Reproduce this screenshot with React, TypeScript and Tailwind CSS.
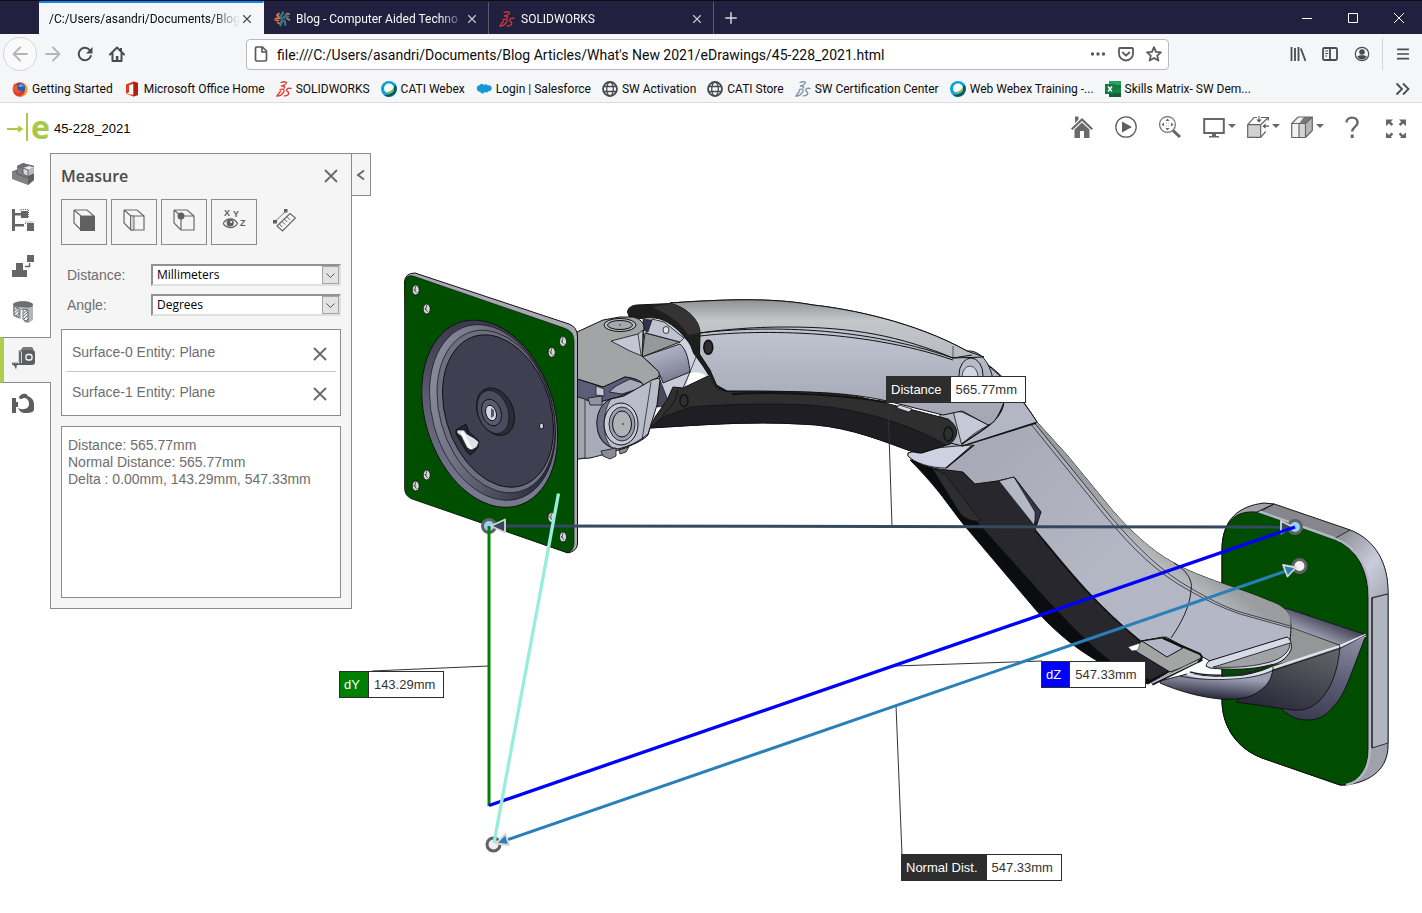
import type { ReactNode } from 'react';
import { Menu, Plus, X } from 'lucide-react';

interface IconProps {
  children: ReactNode;
  size?: number;
  box?: number;
}

function Icon({ children, size = 16, box = 16 }: IconProps) {
  return (
    <svg width={size} height={size} viewBox={`0 0 ${box} ${box}`} fill="none" className="shrink-0" aria-hidden="true">
      {children}
    </svg>
  );
}

/* ---------- favicons ---------- */

function SwIcon({ color }: { color: string }) {
  return (
    <Icon>
      <g stroke={color} strokeWidth="1.3" strokeLinecap="round" strokeLinejoin="round">
        <path d="M5 1.500C8 .3 11 .6 10.300 2.200 9.600 3.600 7.500 4.600 5.500 5c2.800-.2 3.600.8 2.600 2" />
        <path d="M4 8.500c3.600-1.200 5 .2 3.600 2.600C6.200 13.400 3.600 15 .8 15.200L4.600 10" />
        <path d="M15.200 7.500c-2-.6-4.400 0-4.600 1.600-.2 1.500 2.600 1.700 2.100 3.500-.4 1.600-2.400 2.300-4.500 2.200" />
      </g>
    </Icon>
  );
}

function CatiIcon() {
  return (
    <Icon>
      <g strokeWidth="2.200" strokeLinecap="round">
        <path d="M9 1.500L6.500 6M10 6l4-.5M8 9l-1.500 5.500M10.500 9.500l1 4.500M5.500 6.500L3.500 4" stroke="#2d7894" />
        <path d="M5 7.500l5-.5M7 11l4-1M11 4l3.500-1" stroke="#3a6b85" />
        <path d="M5 2.500l-2 1.500 2 3-3.500.5M1 9l3.500.5M13 2.500l2 .5M13 7.500l2.500 1.500M3.500 11.500l2 1" stroke="#e0702b" strokeWidth="1.700" />
      </g>
    </Icon>
  );
}

function FirefoxIcon() {
  return (
    <Icon>
      <circle cx="8" cy="8.500" r="7.300" fill="#e8392b" />
      <path d="M8 1.500a7 7 0 017.300 6.800c0 4-3 7.200-7.300 7.300 3-1 5-3.600 4.800-6.600C12.700 6 11 3 8 1.500z" fill="#ff9a1f" />
      <circle cx="8.300" cy="7" r="4.800" fill="#2a56b5" />
      <path d="M7 3.500c2-.6 4 .2 5 2.200-1-.5-2-.4-2.600.3L7.200 6z" fill="#3fb7e8" />
      <path d="M.8 8C.8 5 2 3 3 2l.6 2.200C5 3.800 6 4.400 6.500 5.500L5.200 7c.4 2.600 3 3.400 5.400 2.600-1 2.400-5 3.400-7.400 1.400C1.800 10 1 9 .8 8z" fill="#f0582a" />
    </Icon>
  );
}

function OfficeIcon() {
  return (
    <Icon>
      <path d="M2 3.500L9.500.5 14 2v12l-4.500 1.500L2 12.800l7.500.9V3L5 4.200v7.300L2 12.800z" fill="#d83b1f" />
      <path d="M9.500.5L14 2v12l-4.500 1.500z" fill="#b3200f" />
    </Icon>
  );
}

function WebexIcon() {
  return (
    <Icon>
      <circle cx="8" cy="8" r="8" fill="#0aa2dc" />
      <path d="M14.500 3.500A8 8 0 013 14.200 10 10 0 0013 6z" fill="#12506e" />
      <circle cx="8" cy="7.500" r="5" fill="#fff" />
      <path d="M12.800 6.200a5 5 0 01-8.600 4.600C8 11.500 11 9.500 12.800 6.200z" fill="#6cbf45" />
    </Icon>
  );
}

function CloudIcon() {
  return (
    <Icon>
      <path d="M1 8.500c-.8-2 .3-4 2.300-4.200C4.500 2.500 7 2.500 8 4c1-1 3-.9 3.700.4 2-.6 4 .7 4 2.900 0 2-1.700 3.200-3.400 2.900-.8 1.500-2.500 1.500-3.400.8-1 2-4 2-4.700-.3C2.500 11 1.300 10 1 8.500z" fill="#1499d6" />
    </Icon>
  );
}

function GlobeIcon() {
  return (
    <Icon>
      <g stroke="#4a4a4c" strokeWidth="1.300">
        <circle cx="8" cy="8" r="7" strokeWidth="1.800" />
        <ellipse cx="8" cy="8" rx="3.300" ry="7" />
        <path d="M2 5.500h12M2 10.500h12" />
      </g>
    </Icon>
  );
}

function ExcelIcon() {
  return (
    <Icon>
      <path d="M4 0h12v16H4z" fill="#21a366" />
      <path d="M10 4h6v4h-6z" fill="#107c41" />
      <path d="M4 8h12v8H4z" fill="#185c37" />
      <path d="M10 8h6v4h-6z" fill="#17864c" />
      <path d="M0 3h10v10H0z" fill="#107c41" />
      <path d="M3 5.500l4 5M7 5.500l-4 5" stroke="#fff" strokeWidth="1.500" />
    </Icon>
  );
}

const bookmarks = [
  { label: 'Getting Started', icon: <FirefoxIcon /> },
  { label: 'Microsoft Office Home', icon: <OfficeIcon /> },
  { label: 'SOLIDWORKS', icon: <SwIcon color="#e03c31" /> },
  { label: 'CATI Webex', icon: <WebexIcon /> },
  { label: 'Login | Salesforce', icon: <CloudIcon /> },
  { label: 'SW Activation', icon: <GlobeIcon /> },
  { label: 'CATI Store', icon: <GlobeIcon /> },
  { label: 'SW Certification Center', icon: <SwIcon color="#7d93ad" /> },
  { label: 'Web Webex Training -...', icon: <WebexIcon /> },
  { label: 'Skills Matrix- SW Dem...', icon: <ExcelIcon /> },
];

/* ---------- browser chrome ---------- */

interface TabProps {
  title: string;
  icon?: ReactNode;
  active?: boolean;
}

function Tab({ title, icon, active }: TabProps) {
  const look = active
    ? 'border-t-[#0a84ff] bg-[#f5f6f7] text-[#0c0c0d] border-r-transparent'
    : 'border-t-transparent text-[#f9f9fa] border-r-[#5b5b74]';
  return (
    <div className={`flex w-[225px] items-center border-t-2 border-r pr-[9px] pl-[10px] ${look}`}>
      {icon && <span className="mr-1.5">{icon}</span>}
      <span className="flex-1 whitespace-nowrap [mask-image:linear-gradient(to_right,black_85%,transparent)]">
        {title}
      </span>
      <button aria-label="Close tab" className="shrink-0">
        <X size={14} strokeWidth={2} className={active ? 'text-[#4a4a4f]' : 'text-[#c5c5d0]'} />
      </button>
    </div>
  );
}

function TabBar() {
  return (
    <div className="flex h-[34px] border-t border-[#0d0d14] bg-[#21213f] pl-[39px]">
      <Tab title="/C:/Users/asandri/Documents/Blog" active />
      <Tab title="Blog - Computer Aided Techno" icon={<CatiIcon />} />
      <Tab title="SOLIDWORKS" icon={<SwIcon color="#d8343c" />} />
      <button aria-label="New tab" className="flex w-[34px] items-center justify-center text-[#d7d7e0]">
        <Plus size={18} strokeWidth={2} />
      </button>
      <div className="ml-auto flex text-white">
        <button aria-label="Minimize" className="flex w-[46px] items-center justify-center">
          <Icon size={10} box={10}><path d="M0 5.500h10" stroke="currentColor" /></Icon>
        </button>
        <button aria-label="Maximize" className="flex w-[46px] items-center justify-center">
          <Icon size={10} box={10}><path d="M.5.5h9v9h-9z" stroke="currentColor" /></Icon>
        </button>
        <button aria-label="Close" className="flex w-[46px] items-center justify-center">
          <Icon size={10} box={10}><path d="M0 0l10 10M10 0L0 10" stroke="currentColor" /></Icon>
        </button>
      </div>
    </div>
  );
}

function NavBar() {
  return (
    <div className="flex h-10 items-center text-[#4a4a4f]">
      <button aria-label="Back" className="ml-[3px] flex size-[34px] items-center justify-center rounded-full border border-[#d4d4d6] bg-[#fafafa] text-[#b5b5b7]">
        <Icon><path d="M15 8H1.500M8 1.500L1.500 8 8 14.500" stroke="currentColor" strokeWidth="1.800" strokeLinecap="round" strokeLinejoin="round" /></Icon>
      </button>
      <button aria-label="Forward" className="flex w-8 justify-center text-[#b5b5b7]">
        <Icon><path d="M1 8h13.500M8 1.500L14.500 8 8 14.500" stroke="currentColor" strokeWidth="1.800" strokeLinecap="round" strokeLinejoin="round" /></Icon>
      </button>
      <button aria-label="Reload" className="flex w-8 justify-center">
        <Icon>
          <path d="M13 4.500A6.200 6.200 0 1013.800 10" stroke="currentColor" strokeWidth="2" strokeLinecap="round" />
          <path d="M15.500 1v6.500H9z" fill="currentColor" />
        </Icon>
      </button>
      <button aria-label="Home" className="flex w-8 justify-center">
        <Icon>
          <path d="M1 8.500l7-7 7 7M3.500 7.500V15h9V7.500" stroke="currentColor" strokeWidth="2" strokeLinecap="round" strokeLinejoin="round" />
          <path d="M6.800 10h2.600v5H6.800zM11 2h2v4h-2z" fill="currentColor" />
        </Icon>
      </button>
      <div className="ml-[113px] flex h-[31px] flex-1 items-center rounded-sm border border-[#b9b9bb] bg-white px-[6px]">
        <Icon><path d="M3 1h6.500L13.500 5v8.500a1.500 1.500 0 01-1.500 1.500H4a1.500 1.500 0 01-1.500-1.500V2.500A1.500 1.500 0 014 1zM9 1.500V6h4" stroke="#5a5a5e" strokeWidth="1.700" strokeLinejoin="round" /></Icon>
        <input
          aria-label="Address"
          className="ml-2 flex-1 bg-transparent pt-0.5 text-sm text-[#0c0c0d] outline-none"
          defaultValue="file:///C:/Users/asandri/Documents/Blog Articles/What's New 2021/eDrawings/45-228_2021.html"
        />
        <div className="flex items-center gap-3">
          <button aria-label="Page actions">
            <Icon><path d="M2.500 6.300a1.700 1.700 0 110 3.400 1.700 1.700 0 010-3.400zM8 6.300a1.700 1.700 0 110 3.400 1.700 1.700 0 010-3.400zM13.500 6.300a1.700 1.700 0 110 3.400 1.700 1.700 0 010-3.400z" fill="#5a5a5e" /></Icon>
          </button>
          <button aria-label="Save to Pocket">
            <Icon><path d="M2 2h12a1 1 0 011 1v4.500a7 7 0 01-14 0V3a1 1 0 011-1zM4.700 6.500L8 9.600l3.300-3.100" stroke="#5a5a5e" strokeWidth="1.800" strokeLinecap="round" strokeLinejoin="round" /></Icon>
          </button>
          <button aria-label="Bookmark this page">
            <Icon><path d="M8 1.200l2 4.700 5 .4-3.800 3.300 1.200 5L8 11.900l-4.400 2.700 1.200-5L1 6.300l5-.4z" stroke="#5a5a5e" strokeWidth="1.800" strokeLinejoin="round" /></Icon>
          </button>
        </div>
      </div>
      <div className="ml-[113px] flex">
        <button aria-label="Library" className="flex w-8 justify-center">
          <Icon><path d="M1.500 1v14M5 2v13M8.500 1v14M10.800 2.500L15.500 15" stroke="currentColor" strokeWidth="1.800" /></Icon>
        </button>
        <button aria-label="Sidebars" className="flex w-8 justify-center">
          <Icon>
            <path d="M2.500 2h11A1.500 1.500 0 0115 3.500v9a1.500 1.500 0 01-1.500 1.500h-11A1.500 1.500 0 011 12.500v-9A1.500 1.500 0 012.500 2zM8 2v12" stroke="currentColor" strokeWidth="1.800" />
            <path d="M3.200 5h3M3.200 7.500h3M3.200 10h2" stroke="currentColor" />
          </Icon>
        </button>
        <button aria-label="Account" className="flex w-8 justify-center">
          <Icon>
            <circle cx="8" cy="8" r="6.700" stroke="currentColor" strokeWidth="1.200" />
            <circle cx="8" cy="6" r="2.800" fill="currentColor" />
            <path d="M3.300 10.500c1.500-1.800 7.900-1.800 9.400 0C11.700 12.500 10 13.500 8 13.500s-3.700-1-4.700-3z" fill="currentColor" />
          </Icon>
        </button>
      </div>
      <button aria-label="Open menu" className="ml-1 flex h-8 w-10 items-center justify-center border-l border-[#d4d4d6]">
        <Menu size={16} strokeWidth={2.500} />
      </button>
    </div>
  );
}

function BookmarkBar() {
  return (
    <nav aria-label="Bookmarks" className="flex h-[29px] items-center gap-[11px] border-b border-[#dcdcde] pt-0.5 pl-3">
      {bookmarks.map((b) => (
        <a key={b.label} href="#" className="flex items-center gap-1 whitespace-nowrap text-[#0c0c0d]">
          {b.icon}
          {b.label}
        </a>
      ))}
      <button aria-label="More bookmarks" className="mr-3 ml-auto text-[#4a4a4f]">
        <Icon><path d="M2.500 2.500L8 8l-5.500 5.500M9 2.500L14.500 8 9 13.500" stroke="currentColor" strokeWidth="1.800" /></Icon>
      </button>
    </nav>
  );
}

/* ---------- viewer toolbar ---------- */

interface Tool {
  label: string;
  icon: ReactNode;
  menu?: boolean;
}

const viewTools: Tool[] = [
  {
    label: 'Home',
    icon: <path d="M0 12.500L11 2l11 10.500-1.500 1.500L11 5 1.500 14zM4 .5h3.500v3L4 7zM3.500 13.500L11 6.500l7.500 7V22H13v-7H9v7H3.500z" fill="#6a6a6a" />,
  },
  {
    label: 'Animate',
    icon: (
      <>
        <circle cx="11" cy="11" r="10.200" stroke="#5f5f5f" strokeWidth="1.300" />
        <path d="M7 5.500l10 5.500-10 5.500z" fill="#5f5f5f" />
      </>
    ),
  },
  {
    label: 'Zoom to fit',
    icon: (
      <>
        <circle cx="8.500" cy="8.500" r="7.900" stroke="#777" strokeWidth="1.300" />
        <path d="M14 14.500l7 6.500" stroke="#666" strokeWidth="3" />
        <path d="M8.500 2.500l2 2.500h-4zM8.500 14.500l2-2.500h-4zM2.500 8.500l2.500-2v4zM14.500 8.500l-2.500-2v4z" fill="#666" />
        <path d="M7 7h.8M9.500 7h.8M7 10h.8M9.500 10h.8" stroke="#888" />
      </>
    ),
  },
  {
    label: 'Display',
    menu: true,
    icon: (
      <>
        <path d="M1.200 3h19.600v14H1.200z" stroke="#666" strokeWidth="2" />
        <path d="M9 17h4v3h3v1.500H6V20h3z" fill="#666" />
      </>
    ),
  },
  {
    label: 'Views',
    menu: true,
    icon: (
      <>
        <path d="M.7 8.700h13v12.600H.7z" fill="#d0d2d3" />
        <path d="M.7 8.700h13v12.600H.7zM.7 8.700L7 1.500h3M14 1.500h7.300L13.700 8.700M13.700 21.300l5-5.800M21.300 1.500v3" stroke="#666" strokeWidth="1.200" />
        <path d="M11.500 0v3.500H9.300L12 6.500l2.700-3h-2.200V0zM22 9.500h-3.500V7.500l-3 2.700 3 2.600v-2H22z" fill="#555" />
      </>
    ),
  },
  {
    label: 'Shading',
    menu: true,
    icon: (
      <>
        <path d="M.7 7.500L7 1h14.300l-6.800 6.500v14H.7z" fill="#f2f2f2" />
        <path d="M8 7.500h6.500v14H8z" fill="#d2d4d6" />
        <path d="M8 7.500L13 1h8.300l-6.800 6.500z" fill="#77797a" />
        <path d="M14.500 7.500L21.300 1v13.500l-6.800 7z" fill="#b4b6b8" />
        <path d="M.7 7.500h13.800v14H.7zM.7 7.500L7 1h14.300l-6.800 6.500M21.300 1v13.500l-6.800 7M8 7.500v14" stroke="#666" strokeWidth="1.200" />
      </>
    ),
  },
];

const pageTools: Tool[] = [
  {
    label: 'Help',
    icon: (
      <>
        <path d="M5.500 6.500C5.500 3.300 8 1.600 11 1.600c3.200 0 5.600 1.800 5.600 4.800 0 4.600-5.400 4.400-5.400 9.200" stroke="#666" strokeWidth="2.400" />
        <path d="M9.700 18.500h3V22h-3z" fill="#666" />
      </>
    ),
  },
  {
    label: 'Full screen',
    icon: <path d="M1 3.500h7L5.800 5.700l2.500 2.500-1.800 1.800L4 7.500 1 10zM21 3.500h-7l2.200 2.200-2.500 2.500 1.800 1.800L18 7.500l3 2.500zM1 23h7l-2.200-2.200 2.500-2.500-1.800-1.800L4 19l-3-2.500zM21 23h-7l2.200-2.200-2.500-2.500 1.800-1.800L18 19l3-2.500z" fill="#666" />,
  },
];

function ToolGroup({ tools }: { tools: Tool[] }) {
  return (
    <div className="flex gap-[22px]">
      {tools.map((t) => (
        <button key={t.label} aria-label={t.label} className="relative">
          <Icon size={22} box={22}>{t.icon}</Icon>
          {t.menu && (
            <span className="absolute top-2 left-[25px] border-x-4 border-t-4 border-x-transparent border-t-[#666]" />
          )}
        </button>
      ))}
    </div>
  );
}

function ViewerToolbar() {
  return (
    <header className="relative flex h-[50px] items-center pr-[15px] pb-0.5 pl-[7px]">
      <svg width="21" height="28" viewBox="0 0 21 28" fill="none" aria-hidden="true">
        <path d="M0 16h14" stroke="#a9c84a" strokeWidth="2" />
        <path d="M11 12.500L16.500 16 11 19.500z" fill="#a9c84a" />
        <path d="M20 0v28" stroke="#a9c84a" strokeWidth="2" />
      </svg>
      <span className="ml-[3px] pb-px font-['Open_Sans',sans-serif] text-[32px] leading-8 font-bold text-[#a9c84a]">e</span>
      <h1 className="ml-1 pt-1 font-['Liberation_Sans',sans-serif] text-[13px] text-black">45-228_2021</h1>
      <div className="ml-auto flex gap-7">
        <ToolGroup tools={viewTools} />
        <ToolGroup tools={pageTools} />
      </div>
    </header>
  );
}

/* ---------- sidebar ---------- */

const sections = [
  {
    label: 'Components',
    icon: (
      <>
        <path d="M0 9l5-2V3l6-3 11 3v14l-6 5L0 16z" fill="#808284" />
        <path d="M5 3l6-3 11 3-5 2.500L11 4 8 6z" fill="#6b6d6f" />
        <path d="M11 5l5 2v6.500L11 11z" fill="#d4d6d8" />
        <path d="M11 5l6-2 5 1.500L16 7z" fill="#e6e8ea" />
        <path d="M16 7l6-2.500V11l-6 2.500z" fill="#b8babc" />
        <path d="M16 13.500l6-2.500v6l-6 5z" fill="#5f6163" />
        <path d="M0 9l5-2v4l11 4M11 5v6l5 2.500 6-2.500M11 5l5 2v6.500" stroke="#4f5153" strokeWidth=".8" />
      </>
    ),
  },
  {
    label: 'Configurations',
    icon: (
      <>
        <path d="M0 0h3v4h6v2.500H3V15h9v2.500H3V22H0z" fill="#666" />
        <path d="M9 2h7v7H9zM15 14h7v8h-7z" fill="#666" />
        <path d="M8 1.500V.5h8.500V8M13.500 15v-2H21" stroke="#666" strokeDasharray="1 1" />
      </>
    ),
  },
  {
    label: 'Explode',
    icon: (
      <>
        <path d="M0 15h4V8h7v7h4v7H0zM15 0h7v7h-7z" fill="#666" />
        <path d="M13 11.500h4.500V8" stroke="#666" strokeWidth="1.500" />
      </>
    ),
  },
  {
    label: 'Section',
    icon: (
      <>
        <path d="M1 4c0-5 20-5 20 0v15l-5 3-4-1V9H9v9l-4-1-4-2z" fill="#b3b5b7" />
        <path d="M1 4c0-5 20-5 20 0-1 3-6 3-10 2C8 6 3 6 1 4z" fill="#6b6d6f" />
        <path d="M2 5.500l5 2v9l-5-2.500zM11 8l5 1v12l-5-2.500z" fill="#f2f2f2" stroke="#666" />
        <path d="M2 10l4-3M2.500 13l4-4M4 15l3-3M11.500 12l4-3M11.500 15l4.500-4M12 18l4-4M14 20l2-2" stroke="#666" />
      </>
    ),
  },
  {
    label: 'Measure',
    icon: (
      <>
        <path d="M8 4l3-4h9l2 3z" fill="#77797b" />
        <path d="M10 3h10a3 3 0 013 3v9a3 3 0 01-3 3H8V5z" fill="#5c5e60" />
        <rect x="14" y="7.500" width="6" height="5.500" rx="2" stroke="#fff" strokeWidth="1.300" />
        <path d="M7.500 3.500V15" stroke="#6b6d6f" strokeWidth="1.500" />
        <path d="M9.500 4.500V16" stroke="#f5f5f5" strokeWidth=".8" />
        <path d="M0 15.500h8V18H5l-1 4.500L2.500 19 0 17.500z" fill="#5c5e60" />
        <path d="M1.500 15v1.500M4 15v1.500M6.500 15v1.500" stroke="#ddd" />
      </>
    ),
  },
  {
    label: 'Mass properties',
    icon: (
      <>
        <path d="M0 5h4v4h2v5H4v6H0z" fill="#5c5e60" />
        <path d="M7 5c0-2 3-5 7-4 1 .3 1.500 1 1.500 2C19 4 22 7 22 11v5c0 3-3 4-8 4-3 0-5-.5-6.500-2.500L6 15c5 2.500 11 1 11-4 0-3.500-2-6-5-6-1.500 0-3 2.500-5 0z" fill="#5c5e60" />
      </>
    ),
  },
];

function Sidebar({ current }: { current: string }) {
  return (
    <nav aria-label="Tools" className="flex w-[50px] flex-col">
      {sections.map((s) => (
        <button
          key={s.label}
          aria-label={s.label}
          className={
            s.label === current
              ? 'relative z-10 -mr-px h-[46px] border-y border-l-4 border-y-[#8b8b8b] border-l-[#b0cc4b] bg-[#f5f5f5] pt-[9px] pl-2'
              : 'h-[46px] pt-[10px] pl-3'
          }
        >
          <span className="flex h-9 items-start"><Icon size={23} box={23}>{s.icon}</Icon></span>
        </button>
      ))}
    </nav>
  );
}

/* ---------- measure panel ---------- */

const cube = <path d="M1 1h13l7 6M1 1v13l7 7M1 1l7 6M8 7h13v14H8z" stroke="#6a6a6a" strokeWidth="1.200" />;

const filters = [
  { label: 'Face', icon: <>{cube}<path d="M7 7h15v15H7z" fill="#606060" /></> },
  { label: 'Edge', icon: <>{cube}<path d="M7.500 7h3.500v14H7.500z" fill="#d5d5d5" stroke="#6a6a6a" /></> },
  { label: 'Vertex', icon: <>{cube}<circle cx="8" cy="7" r="3.500" fill="#606060" /></> },
];

interface UnitFieldProps {
  id: string;
  label: string;
  options: string[];
}

function UnitField({ id, label, options }: UnitFieldProps) {
  return (
    <div className="flex items-center pl-[6px]">
      <label htmlFor={id} className="w-[84px] text-[#6e6e6e]">{label}</label>
      <div className="relative flex-1">
        <select
          id={id}
          className="h-[22px] w-full appearance-none border-2 border-t-[#8f9296] border-r-[#e0e0e0] border-b-[#e0e0e0] border-l-[#8f9296] bg-white pl-1 font-['Open_Sans',sans-serif] text-xs text-black"
        >
          {options.map((o) => <option key={o}>{o}</option>)}
        </select>
        <span className="pointer-events-none absolute top-0.5 right-0.5 flex h-[18px] w-[17px] items-center justify-center border border-[#a5a5a5] bg-[#e3e3e3]">
          <Icon size={9} box={9}><path d="M.5 2.500l4 4 4-4" stroke="#555" /></Icon>
        </span>
      </div>
    </div>
  );
}

function CloseIcon() {
  return <Icon size={14} box={14}><path d="M1 1l12 12M13 1L1 13" stroke="#6a6a6a" strokeWidth="1.800" /></Icon>;
}

function MeasurePanel() {
  return (
    <section className="w-[302px] border border-[#8b8b8b] bg-[#f5f5f5] px-[10px] pb-[10px] font-['Liberation_Sans',sans-serif] text-sm text-[#6e6e6e]">
      <div className="mb-0.5 flex h-[43px] items-center justify-between pr-[3px]">
        <h2 className="font-['Open_Sans',sans-serif] text-base font-semibold text-[#4a4a4a]">Measure</h2>
        <button aria-label="Close panel"><CloseIcon /></button>
      </div>
      <div className="flex gap-1">
        {filters.map((f) => (
          <button key={f.label} aria-label={f.label} className="flex size-[46px] items-center justify-center border border-[#8b8b8b] pb-1">
            <Icon size={23} box={23}>{f.icon}</Icon>
          </button>
        ))}
        <button aria-label="XYZ" className="flex size-[46px] items-center justify-center border border-[#8b8b8b] pb-1">
          <Icon size={23} box={23}>
            <path d="M0 14.500c4-6 11-6 14.500 0-3.500 5.500-10.500 5.500-14.500 0z" stroke="#606060" strokeWidth="1.300" />
            <circle cx="7.200" cy="14" r="3.600" fill="#606060" />
            <circle cx="8.200" cy="13" r="1" fill="#fff" />
            <g fill="#606060" fontFamily="Liberation Sans, sans-serif" fontSize="9" fontWeight="bold">
              <text x="1" y="7">X</text>
              <text x="10" y="8">Y</text>
              <text x="17" y="17">Z</text>
            </g>
          </Icon>
        </button>
        <button aria-label="Units" className="flex size-[46px] items-center justify-center pb-1">
          <Icon size={23} box={23}>
            <path d="M4 17L17 4.500l5.500 4.500L9.500 22z" stroke="#666" strokeWidth="1.200" />
            <path d="M6.500 15l2.500 3M9 12.500l3 3M11.500 10l2.500 3M14 7.800l3 3" stroke="#666" />
            <path d="M2 12.500L12.500 2.500" stroke="#777" />
            <path d="M0 11h4v3.500H0zM11 0h3.500v3.500H11z" fill="#606060" />
          </Icon>
        </button>
      </div>
      <div className="mt-[19px] flex flex-col gap-2">
        <UnitField id="distance-unit" label="Distance:" options={['Millimeters', 'Inches']} />
        <UnitField id="angle-unit" label="Angle:" options={['Degrees', 'Radians']} />
      </div>
      <ul className="mt-[13px] border border-[#8b8b8b] bg-white px-1 pt-0.5 pb-[3px]">
        {['Surface-0 Entity: Plane', 'Surface-1 Entity: Plane'].map((name) => (
          <li key={name} className="flex h-10 items-center justify-between border-b border-[#c9c9c9] pt-1 pr-[9px] pl-[6px] last:border-transparent">
            <span className="pb-1">{name}</span>
            <button aria-label={`Remove ${name}`}><CloseIcon /></button>
          </li>
        ))}
      </ul>
      <div className="mt-[10px] h-[172px] border border-[#8b8b8b] bg-white px-[6px] py-[10px] leading-[17px]">
        <p>Distance: 565.77mm</p>
        <p>Normal Distance: 565.77mm</p>
        <p>Delta : 0.00mm, 143.29mm, 547.33mm</p>
      </div>
    </section>
  );
}

/* ---------- model ---------- */

const screwHoles = [
  [415.7, 290], [426.7, 309], [563, 341.5], [551.7, 352.3],
  [415.7, 486], [426.7, 475], [551.5, 517.5], [563, 537],
];

function BasePlate() {
  return (
    <g stroke="#111" strokeWidth="1">
      <path d="M1222 550C1222 518 1240 506 1264 503L1274 504 1350 530C1376 540 1388 564 1388 592V746C1388 766 1374 782 1345 785L1340 785 1262 758C1236 748 1222 726 1222 700z" fill="#9fa1ab" />
      <path d="M1274 504L1350 530 1334 539 1260 512z" fill="#85878b" strokeWidth=".6" />
      <path d="M1350 530C1376 540 1388 564 1388 592V594L1370 598C1368 570 1358 548 1334 539z" fill="url(#rim)" strokeWidth=".6" />
      <path d="M1388 594V743L1372 748V598z" fill="#b1b4c1" strokeWidth=".8" />
      <path d="M1222 550C1222 520 1238 508 1262 513L1334 539C1358 549 1368 572 1368 598V750C1368 772 1358 786 1340 785L1262 758C1236 748 1222 726 1222 700z" fill="#004c00" />
      <path d="M1258 511L1334 538C1360 548 1370 572 1370 598V748C1370 766 1362 782 1346 785" fill="none" stroke="#b5b8c8" strokeWidth="2.400" />
      <path d="M1372 598V748M1257 512L1274 504" fill="none" />
    </g>
  );
}

function MountBlock() {
  return (
    <g stroke="#111" strokeWidth=".9" strokeLinejoin="round">
      <path d="M1285 608L1366 635 1350 677C1345 690 1340 700 1333 707 1326 716 1318 720 1307 720 1296 720 1288 715 1280 708z" fill="url(#block)" />
      <path d="M1285 608L1366 635 1339 645 1290 628z" fill="url(#blocktop)" strokeWidth=".6" />
      <path d="M1290 627L1339 645 1293 662 1240 670z" fill="#949698" strokeWidth=".6" />
      <path d="M1273 668L1340 647C1338 672 1330 690 1320 700 1312 708 1304 711 1293 710L1236 702z" fill="url(#wedge)" />
      <path d="M1160 681L1187 674 1233 678 1273 668C1272 680 1266 687 1258 692 1250 698 1238 700 1220 699 1200 697 1178 691 1160 683z" fill="url(#cup)" />
      <path d="M1187 674C1200 678 1215 679 1233 678 1250 677 1262 673 1273 668L1340 646 1366 635" fill="none" stroke="#dfe1ec" strokeWidth="2.800" />
      <path d="M1180 676C1200 681 1250 682 1273 670.500L1340 648.500 1366 635M1339 644.500L1340 648M1273 667V671" fill="none" strokeWidth=".8" />
      <path d="M1190 672C1210 677 1240 677 1268 667" fill="none" stroke="#24232f" strokeWidth="1.500" />
    </g>
  );
}

function LowerArm() {
  return (
    <g stroke="#111" strokeWidth="1" strokeLinejoin="round">
      {/* dark underside */}
      <path d="M910 460C940 490 950 508 964 525L1030 603C1060 640 1100 668 1148 684L1176 668 1140 641 1040 530 1010 470z" fill="#0b0c10" />
      <path d="M932 465L977 522 1047 600C1068 622 1090 646 1112 662L1150 680 1176 668 1140 641 1040 525 1010 472z" fill="#28272d" strokeWidth=".7" />
      <path d="M932 468L945 474 981 521C972 522 962 518 958 510z" fill="#2e2e30" strokeWidth=".7" />
      {/* shell */}
      <path d="M908 453L946 440 985 363C1000 372 1018 392 1037 422L1067 455 1113 511C1130 530 1150 550 1174 563 1200 578 1240 588 1277 604 1292 611 1292 622 1290 640L1210 661 1166 637 1140 641C1090 600 1060 560 1035 530L1041 512 1014 477 997 481 975 484 963 472 947 470C930 469 915 463 908 456z" fill="url(#shell)" />
      <path d="M1037 422L1067 455 1113 511C1130 530 1150 550 1174 563 1200 578 1240 588 1277 604 1290 611 1292 618 1290 626L1240 612C1222 606 1208 598 1192 589 1160 571 1135 545 1110 516L1018 404z" fill="url(#edge)" stroke="none" />
      <path d="M1018 404L1037 426 1110 516C1135 545 1160 571 1192 589 1208 598 1222 606 1240 612L1290 626M1016 406L1034 428 1107 518C1132 548 1158 574 1190 591 1206 600 1222 608 1240 614L1290 628" fill="none" strokeWidth=".7" />
      <path d="M1174 563C1188 571 1193 582 1191 590 1190 606 1182 622 1171 638" fill="none" strokeWidth=".9" />
      <path d="M908 453C920 450 940 447 972 445L946 468C930 468 915 463 908 456z" fill="#cdd1e2" strokeWidth=".8" />
      <path d="M962 446L1036 423M946 468L974 445" fill="none" strokeWidth="1.600" />
      <path d="M999 481L1014 477 1037 512 1034 525z" fill="#b4b8c4" strokeWidth=".6" />
      <path d="M1014 477L1041 512 1035 526V512z" fill="#35344a" strokeWidth=".6" />
      <path d="M1035 530C1060 560 1090 600 1140 641" fill="none" strokeWidth="1.800" />
      {/* clip */}
      <path d="M1132 649L1142 641 1163 637 1200 654C1203 657 1202 660 1198 662L1170 672z" fill="#a2a5a4" />
      <path d="M1202 659L1152 684" fill="none" strokeWidth="3.500" />
      <path d="M1200 660L1152 683" fill="none" stroke="#b9bcc8" strokeWidth="1.500" />
      <path d="M1142 641L1162 638 1183 648 1167 657z" fill="#b3b6c4" />
      <path d="M1163 638L1200 654C1203 657 1202 660 1198 662" fill="none" strokeWidth="2" />
      <path d="M1128 647L1140 643 1138 650 1132 651z" fill="#fff" strokeWidth=".5" />
      <path d="M1206 666C1207 662 1209 661 1212 660L1287 637C1291 639 1292 645 1291 650 1286 660 1278 664 1270 665 1252 670 1230 670 1210 668z" fill="#d7dae8" />
      <path d="M1213 667L1217 666 1290 643C1290 655 1276 661 1266 663 1250 667 1232 668 1213 667z" fill="#a0a2a5" strokeWidth=".8" />
    </g>
  );
}

function UpperArm() {
  return (
    <g stroke="#111" strokeWidth="1" strokeLinejoin="round">
      {/* elbow */}
      <path d="M940 380L985 363C1002 376 1022 398 1037 422L962 446 940 440z" fill="#b3b6c3" />
      <path d="M953 411L962 412 989 425C975 432 965 440 962 446z" fill="#c5c8d6" strokeWidth=".8" />
      <path d="M1004 400C1003 422 978 432 962 444" fill="none" strokeWidth="1.400" />
      {/* shoulder */}
      <path d="M643 320H676L700 352 716 388 682 388 657 370z" fill="#cfd2df" stroke="none" />
      <path d="M690 373C696 371 703 373 707 377L686 386z" fill="#fff" stroke="none" />
      <path d="M645 333L680 342 642 357z" fill="#96989b" strokeWidth=".9" />
      <path d="M652 319L664 322 684 338 680 342 646 333z" fill="#bfc2cf" strokeWidth=".8" />
      <path d="M643 319L652 320 648 332 643 330z" fill="#34334a" strokeWidth=".6" />
      <ellipse cx="666" cy="330" rx="3" ry="3.500" fill="#e2e4ec" strokeWidth=".8" />
      <path d="M657 370L690 372 683 388 666 405 657 406z" fill="#c8cbda" strokeWidth=".8" />
      <path d="M660 380L667 398 665 406 657 407z" fill="#4a4860" strokeWidth=".7" />
      <path d="M642 357L680 344C687 350 689 362 690 372L663 383C660 372 652 364 642 357z" fill="url(#tube)" strokeWidth=".9" />
      <path d="M690 372L698 352" fill="none" strokeWidth=".7" />
      {/* light shell */}
      <path d="M670 303C740 298 780 299 813 305 850 309 915 322 967 351 980 350 990 362 993 380L1004 402C998 418 993 424 988 425L962 411 943 415 887 401C850 393 820 391 727 391 720 390 717 387 715 383L699 354V331z" fill="url(#face)" />
      <path d="M670 303C740 298 780 299 813 305 850 309 915 322 967 351L984 357 953 358C900 336 853 327 787 327 750 327 720 330 700 333z" fill="url(#top)" />
      <path d="M700 333C750 327 853 323 953 358L972 355M700 336C750 330 860 328 953 360" fill="none" />
      <path d="M953 358V346" fill="none" strokeWidth=".6" />
      <ellipse cx="971" cy="375" rx="12" ry="17" fill="#b9bcc8" />
      <ellipse cx="970" cy="377" rx="8" ry="11" fill="#d5d8e2" strokeWidth=".7" />
      <ellipse cx="708.300" cy="347.300" rx="4.500" ry="7" fill="#2e2e2e" strokeWidth="1.500" />
      {/* dark lower link */}
      <path d="M650 428L655 417 667 400 673 387 683 388 708 376 717 389 727 391.500C790 391 830 392 860 397L913 410 948 419C958 426 960 436 950 444L922 453C915 453 910 451 905 449 870 436 840 425 800 424 750 421 700 425 650 428z" fill="#2f2f2f" />
      <path d="M663 417L690 407C730 404 790 402 830 407 880 414 920 430 946 445L920 453 905 449C870 436 840 425 800 424 750 421 700 425 650 428z" fill="#1f1e23" strokeWidth=".8" />
      <path d="M732 394C770 392 830 393 886 402" fill="none" strokeWidth="2" />
      <path d="M677 390C678 400 670 408 662 416" fill="none" strokeWidth=".9" />
      <ellipse cx="684" cy="400.700" rx="4" ry="6" fill="#2f2f2f" strokeWidth="1.400" />
      <ellipse cx="948.300" cy="434" rx="4.500" ry="7" fill="#2f2f2f" strokeWidth="1.400" />
      <path d="M899 405L912 409 909 412 897 408z" fill="#d9dbe2" strokeWidth=".7" />
      {/* black cap */}
      <path d="M627.500 312C628 308 631 305.500 637 305L671 303.500C688 308 700 321 700 333L699.500 354 710 370 716.500 385 727 391 717 388 703 366 693.500 353C692 348 690 343 686 339 680 331 670 322 660 319 648 316 638 320 630 319z" fill="#1f1e1f" />
      <path d="M671 303.500C688 308 700 321 700 333L688 335C680 322 668 314 652 307z" fill="#353334" stroke="none" />
    </g>
  );
}

function Knuckle() {
  return (
    <g stroke="#111" strokeWidth="1" strokeLinejoin="round">
      <path d="M577 383L600 387 640 368 660 376 655 408 648 435C640 444 615 452 590 458L577 459z" fill="#a9abb8" />
      <path d="M577 332L603 320 620 317H633C640 319 644 322 644 328L642 356 657 370C661 374 660 378 652 380L644 387C643 382 636 379 625 377 616 381 610 386 603 387L577 379z" fill="#a2a5a5" />
      <path d="M611 341L638 334 643 330 642 356 630 351z" fill="#c3c6d3" strokeWidth=".8" />
      <path d="M638 334L641 355" fill="none" strokeWidth=".7" />
      <ellipse cx="620" cy="325" rx="16" ry="6.500" fill="#bfc1c8" />
      <ellipse cx="620" cy="325" rx="12.500" ry="4.500" fill="#a6a8ae" />
      <circle cx="620" cy="325" r=".7" fill="#111" stroke="none" />
      <path d="M577 379L603 387 625 377C636 378 644 382 644 387L618 397 596 403 577 397z" fill="#5c5d78" />
      <path d="M596 386L604 389V396L596 395z" fill="#c3c6d3" strokeWidth=".7" />
      <path d="M609 392L616 386 630 379 642 383 644 387 622 394z" fill="#a7aabb" strokeWidth=".8" />
      <path d="M588 398L602 396V405L590 405z" fill="#9194a4" strokeWidth=".8" />
      <path d="M577 397L585 399V458L577 459z" fill="#a3a5ae" strokeWidth=".7" />
      <path d="M597 423C597 412 602 403 611 399L624 396 652 380C656 379 659 377 660 380L657 405 648 434C638 442 630 446 618 449 604 447 597 438 597 423z" fill="#b9bcc9" />
      <path d="M597 423C597 412 602 403 611 399 603 410 601 436 611 447 602 443 597 434 597 423z" fill="#6f7188" strokeWidth=".7" />
      <path d="M651 382L642 440" fill="none" strokeWidth=".7" />
      <ellipse cx="621" cy="424" rx="17" ry="21" fill="#c6c9d6" />
      <ellipse cx="622" cy="424" rx="13" ry="17" fill="#9a9db0" strokeWidth=".8" />
      <ellipse cx="622" cy="424" rx="9.500" ry="13" fill="#b1b3b6" />
      <circle cx="623" cy="424" r=".8" fill="#111" stroke="none" />
      <path d="M601 451L616 448V456L610 459 603 456zM619 450L629 447 626 452 620 454z" fill="#8a8c98" strokeWidth=".8" />
    </g>
  );
}

function FacePlate() {
  return (
    <g stroke="#111" strokeWidth="1">
      <path d="M404.500 282Q405 273 415 273L569 324Q577.500 327 577.500 337V544Q577 551 568 553L411 498z" fill="#a7a9b3" />
      <path d="M404.500 285Q405 274 413 276L564 328Q574 331 574 341V544Q573 552 567 552.500L412 499Q404.500 496 404.500 488z" fill="#004f00" strokeWidth=".7" />
      <g>
        <circle r="100" transform="matrix(.68 .22 0 .91 489.700 413.700)" fill="url(#dish)" vectorEffect="non-scaling-stroke" />
        <circle r="100" transform="matrix(.63 .2 0 .855 492.500 412.500)" fill="url(#dish2)" vectorEffect="non-scaling-stroke" strokeWidth=".7" />
        <circle r="100" transform="matrix(.59 .19 0 .79 496 411.500)" fill="#6d6e80" vectorEffect="non-scaling-stroke" strokeWidth=".7" />
        <circle r="100" transform="matrix(.555 .18 0 .74 498 411)" fill="#403f51" vectorEffect="non-scaling-stroke" />
        <circle r="100" transform="matrix(.19 .06 0 .23 495.500 411.700)" fill="#2c2b3a" vectorEffect="non-scaling-stroke" />
        <circle r="100" transform="matrix(.16 .05 0 .21 493 412)" fill="#4b4a5e" vectorEffect="non-scaling-stroke" strokeWidth=".7" />
        <circle r="100" transform="matrix(.1 .03 0 .13 491.500 412.500)" fill="#5b5b70" vectorEffect="non-scaling-stroke" />
        <circle r="100" transform="matrix(.055 .02 0 .075 491 413)" fill="#d4d7e2" vectorEffect="non-scaling-stroke" />
        <path d="M491 408l3 2v6l-3 2z" fill="#55566c" stroke="none" />
      </g>
      <ellipse cx="541.500" cy="426" rx="2" ry="3" fill="#d6d8e0" />
      <path d="M456 430L466 424 469 432 479 441 478 447 474 452 470 455 467 452 456 434z" fill="#24232f" />
      <path d="M457 430L464 430 467 434 474 438 479 442 477 447 472 450 467 448 461 436 457 433z" fill="#dfe1e8" strokeWidth=".7" />
      <path d="M462 432L471 449" stroke="#fff" strokeWidth="2.500" />
      {screwHoles.map(([x, y]) => (
        <g key={`${x}-${y}`}>
          <ellipse cx={x} cy={y} rx="3.500" ry="4.900" fill="#d6d8dc" strokeWidth=".8" />
          <path d={`M${x - 2} ${y - 1}l3 4M${x} ${y - 4}l-1 5`} stroke="#333" strokeWidth=".8" />
        </g>
      ))}
    </g>
  );
}

function Model() {
  return (
    <svg className="absolute inset-0 h-full w-full overflow-visible" fill="none" role="img" aria-label="Monitor arm model">
      <defs>
        <linearGradient id="top" x1="0" y1="0" x2="0" y2="1">
          <stop offset="0" stopColor="#8e9093" />
          <stop offset=".35" stopColor="#c4c7c9" />
          <stop offset="1" stopColor="#b7bac0" />
        </linearGradient>
        <linearGradient id="face" x1="0" y1="0" x2="0" y2="1">
          <stop offset=".15" stopColor="#c5c8d5" />
          <stop offset=".6" stopColor="#b0b3c0" />
          <stop offset="1" stopColor="#a2a5b1" />
        </linearGradient>
        <linearGradient id="shell" gradientUnits="userSpaceOnUse" x1="1000" y1="420" x2="1250" y2="660">
          <stop offset="0" stopColor="#a7aab6" />
          <stop offset=".5" stopColor="#b3b6c3" />
          <stop offset="1" stopColor="#b4b7c5" />
        </linearGradient>
        <linearGradient id="edge" gradientUnits="userSpaceOnUse" x1="1110" y1="540" x2="1130" y2="513">
          <stop offset="0" stopColor="#c2c5c9" />
          <stop offset="1" stopColor="#9a9c9f" />
        </linearGradient>
        <linearGradient id="tube" x1="0" y1="0" x2=".4" y2="1">
          <stop offset="0" stopColor="#c4c6d6" />
          <stop offset="1" stopColor="#7d7f95" />
        </linearGradient>
        <linearGradient id="dish" x1="0" y1="0" x2=".3" y2="1">
          <stop offset="0" stopColor="#2f2e42" />
          <stop offset=".5" stopColor="#5c5c72" />
          <stop offset="1" stopColor="#77798e" />
        </linearGradient>
        <linearGradient id="dish2" x1="0" y1=".2" x2="1" y2=".5">
          <stop offset="0" stopColor="#8e90a2" />
          <stop offset=".4" stopColor="#6c6d80" />
          <stop offset="1" stopColor="#2c2b3e" />
        </linearGradient>
        <linearGradient id="rim" x1="0" y1="0" x2="1" y2="1">
          <stop offset="0" stopColor="#84868c" />
          <stop offset=".6" stopColor="#c9ccda" />
          <stop offset="1" stopColor="#a5a8b4" />
        </linearGradient>
        <linearGradient id="block" x1=".5" y1="0" x2=".3" y2="1">
          <stop offset=".2" stopColor="#8a8ba2" />
          <stop offset=".6" stopColor="#5b5c74" />
          <stop offset="1" stopColor="#3c3b52" />
        </linearGradient>
        <linearGradient id="blocktop" gradientUnits="userSpaceOnUse" x1="1312" y1="637" x2="1320" y2="618">
          <stop offset="0" stopColor="#a3a5b8" />
          <stop offset="1" stopColor="#4b4a60" />
        </linearGradient>
        <linearGradient id="wedge" x1="1" y1="0" x2=".3" y2="1">
          <stop offset="0" stopColor="#66676c" />
          <stop offset="1" stopColor="#2a2938" />
        </linearGradient>
        <linearGradient id="cup" gradientUnits="userSpaceOnUse" x1="1220" y1="677" x2="1218" y2="700">
          <stop offset="0" stopColor="#9c9fb4" />
          <stop offset="1" stopColor="#242335" />
        </linearGradient>
      </defs>
      {/* model space starts below the 103px of browser chrome */}
      <g transform="translate(0 -103)">
        <BasePlate />
        <MountBlock />
        <LowerArm />
        <UpperArm />
        <Knuckle />
        <FacePlate />

        <g stroke="#333" strokeWidth="1">
          <path d="M888 403L892 526M372 671L489 666M895 666L1042 661M896 705L902 855" />
        </g>
        <g fill="#9bd0fb" stroke="#5f6264" strokeWidth="3">
          <circle cx="489" cy="526" r="6.500" />
          <circle cx="1295" cy="527" r="6.500" />
          <circle cx="1299.500" cy="566" r="6.500" fill="#f0f0f0" />
          <circle cx="493.500" cy="844.500" r="6.500" fill="#f0f0f0" />
        </g>
        <g strokeWidth="3">
          <path d="M505 526L1283 527" stroke="#34495e" />
          <path d="M508 839.500L1286 571" stroke="#2980b9" />
        </g>
        <g stroke="#d6d6d6" strokeWidth="1.800" strokeLinejoin="round">
          <path d="M491 526L505 519.500V532.500z" fill="#34495e" />
          <path d="M1293 527L1281 521V533.500z" fill="#34495e" />
          <path d="M496 843.500L505.500 834 509 845z" fill="#2980b9" />
          <path d="M1296 567.500L1283 565 1287.500 576.500z" fill="#2980b9" />
        </g>
        <path d="M489 526V806" stroke="#008000" strokeWidth="3" />
        <path d="M489 805.500L1295 527" stroke="#0000ff" strokeWidth="3.300" />
        <path d="M558.500 493.500L494 843" stroke="#98eedc" strokeWidth="3.300" />
      </g>
    </svg>
  );
}

interface CalloutProps {
  name: string;
  value: string;
  place: string;
  tone?: string;
}

function Callout({ name, value, place, tone = 'bg-[#2d2d2d]' }: CalloutProps) {
  return (
    <div className={`absolute flex h-[27px] items-center border border-[#2d2d2d] bg-white font-['Liberation_Sans',sans-serif] text-[13px] whitespace-nowrap ${place}`}>
      <span className={`flex h-full items-center border-r border-[#2d2d2d] pr-2 pl-1 text-white ${tone}`}>{name}</span>
      <span className="pr-2 pl-[5px] text-[#333]">{value}</span>
    </div>
  );
}

export default function App() {
  return (
    <div className="flex min-h-screen flex-col bg-white font-[Roboto,sans-serif] text-xs">
      <div className="bg-[#f5f6f7]">
        <TabBar />
        <NavBar />
        <BookmarkBar />
      </div>
      <main className="relative flex-1 overflow-hidden">
        <Model />
        <Callout name="Distance" value="565.77mm" place="left-[886px] top-[273px]" />
        <Callout name="dY" value="143.29mm" place="left-[339px] top-[568px]" tone="bg-[#008000]" />
        <Callout name="dZ" value="547.33mm" place="left-[1041px] top-[558px]" tone="bg-[#0000ff]" />
        <Callout name="Normal Dist." value="547.33mm" place="left-[901px] top-[751px]" />
        <ViewerToolbar />
        <div className="relative flex items-start">
          <Sidebar current="Measure" />
          <MeasurePanel />
          <button aria-label="Collapse panel" className="-ml-px flex h-[43px] w-5 items-center justify-center border border-[#8b8b8b] bg-[#f5f5f5]">
            <Icon size={12} box={12}><path d="M9 1.500L3 6l6 4.500" stroke="#6a6a6a" strokeWidth="2" /></Icon>
          </button>
        </div>
      </main>
    </div>
  );
}
